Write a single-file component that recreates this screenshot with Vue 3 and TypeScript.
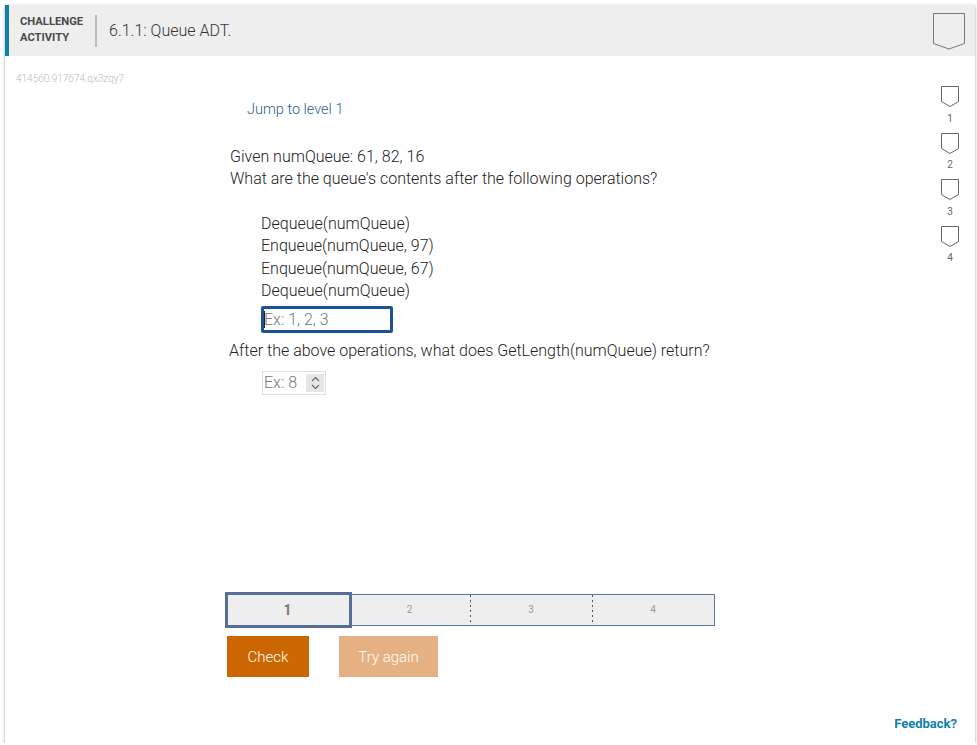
<script setup lang="ts">
const ops: string[] = ['Dequeue(numQueue)', 'Enqueue(numQueue, 97)', 'Enqueue(numQueue, 67)', 'Dequeue(numQueue)']
const levels: number[] = [1, 2, 3, 4]
</script>

<template>
  <div class="card">
    <header class="head">
      <div class="label"><span>CHALLENGE<br />ACTIVITY</span></div>
      <div class="title">6.1.1: Queue ADT.</div>
      <svg class="big-shield" width="34" height="38" viewBox="0 0 34 38">
        <path d="M1.5 1.5H32.5V31.5L17 37L1.5 31.5Z" />
      </svg>
    </header>
    <div class="body">
      <div class="code">414560.917674.qx3zqy7</div>
      <main class="main">
        <a class="jump">Jump to level 1</a>
        <p class="line first">Given numQueue: 61, 82, 16</p>
        <p class="line">What are the queue's contents after the following operations?</p>
        <div class="ops">
          <p v-for="(op, i) in ops" :key="i" class="line">{{ op }}</p>
        </div>
        <div class="answer"><span class="caret"></span><span class="ph">Ex: 1, 2, 3</span></div>
        <p class="line second">After the above operations, what does GetLength(numQueue) return?</p>
        <div class="number">
          <span class="ph">Ex: 8</span>
          <span class="spin">
            <svg width="9" height="14" viewBox="0 0 9 14">
              <path d="M1 5L4.5 1.5L8 5M1 9L4.5 12.5L8 9" />
            </svg>
          </span>
        </div>
        <div class="levels">
          <div class="lv active">1</div>
          <div class="lv w2">2</div>
          <div class="lv w3">3</div>
          <div class="lv w4">4</div>
        </div>
        <div class="actions">
          <button class="btn check">Check</button>
          <button class="btn again">Try again</button>
        </div>
      </main>
      <aside class="side">
        <div v-for="n in levels" :key="n" class="mini">
          <svg width="18" height="21" viewBox="0 0 18 21">
            <path d="M.5 .5H17.5V15.5L9 20.5L.5 15.5Z" />
          </svg>
          <span>{{ n }}</span>
        </div>
      </aside>
      <a class="feedback">Feedback?</a>
    </div>
  </div>
</template>

<style>
html, body { margin: 0; background: #fff; }
</style>

<style scoped>
.card {
  box-sizing: border-box;
  width: 970px;
  height: 738px;
  margin: 5px 0 0 5px;
  background: #fff;
  box-shadow: 0 1px 3px rgba(0, 0, 0, 0.35);
  font-family: Roboto, "Liberation Sans", sans-serif;
  color: #333;
  display: flex;
  flex-direction: column;
}
.head {
  height: 51px;
  flex: none;
  box-sizing: border-box;
  background: #eee;
  border-left: 4px solid #0e80ae;
  display: flex;
  align-items: center;
  padding-right: 9px;
}
.label {
  flex: none;
  width: 75px;
  margin-left: 11px;
  height: 32px;
  font-size: 11.2px;
  font-weight: 700;
  line-height: 16px;
  color: #4a4a4a;
  border-right: 2px solid #bbb;
  margin-right: 12px;
}
.label span { display: block; margin-top: -1px; }
.title {
  flex: 1;
  font-size: 16px;
  font-weight: 300;
  color: #333;
}
.big-shield path { fill: none; stroke: #777; stroke-width: 1; }
.body {
  flex: 1;
  position: relative;
  display: flex;
}
.code {
  position: absolute;
  left: 11px;
  top: 17px;
  font-size: 10px;
  font-weight: 300;
  color: #bbb;
}
.main {
  margin-left: 221px;
  width: 490px;
  display: flex;
  flex-direction: column;
  align-items: flex-start;
  padding-top: 45px;
}
.jump {
  margin-left: 21px;
  font-size: 14.5px;
  line-height: 18px;
  font-weight: 300;
  color: #2a5f8f;
  margin-bottom: 27px;
}
.line {
  margin: 0;
  font-size: 16px;
  font-weight: 300;
  line-height: 22.4px;
  color: #222;
  white-space: nowrap;
}
.first, .main > .line { margin-left: 4px; }
.ops { margin: 22px 0 0 35px; }
.answer {
  box-sizing: border-box;
  width: 132px;
  height: 27px;
  margin: 4px 0 0 35px;
  border: 3px solid #1c5394;
  border-radius: 2px;
  display: flex;
  align-items: center;
}
.caret { width: 1px; height: 17px; background: #222; margin-right: -1px; }
.ph { font-size: 16px; font-weight: 300; color: #777; }
.main > .second { margin: 7px 0 0 3px; }
.number {
  box-sizing: border-box;
  width: 64px;
  height: 24px;
  margin: 8px 0 0 36px;
  border: 1px solid #ddd;
  display: flex;
  align-items: center;
  justify-content: space-between;
  padding: 0 1px;
}
.spin {
  width: 18px;
  height: 18px;
  background: #e6e6e6;
  display: flex;
  align-items: center;
  justify-content: center;
}
.spin path { fill: none; stroke: #666; stroke-width: 1.2; }
.levels {
  margin-top: 197px;
  width: 490px;
  height: 36px;
  display: flex;
  align-items: center;
}
.lv {
  box-sizing: border-box;
  height: 32px;
  background-color: #eee;
  border-top: 1px solid #5b7a9b;
  border-bottom: 1px solid #5b7a9b;
  display: flex;
  align-items: center;
  justify-content: center;
  font-size: 10px;
  color: #999;
}
.active {
  width: 127px;
  height: 36px;
  margin-left: -1px;
  padding-right: 2px;
  border: 3px solid #566e96;
  font-size: 14px;
  font-weight: 700;
  color: #777;
}
.w2, .w3 {
  background-image: repeating-linear-gradient(#556 0 2px, transparent 2px 5px);
  background-size: 1px 100%;
  background-position: right top;
  background-repeat: no-repeat;
}
.w2 { width: 119px; padding-right: 4px; }
.w3 { width: 122px; padding-right: 2px; }
.w4 { width: 122px; padding-right: 1px; border-right: 1px solid #5b7a9b; }
.actions {
  display: flex;
  gap: 30px;
  margin: 8px 0 0 1px;
}
.btn {
  border: 0;
  height: 41px;
  padding: 1px 0 0;
  font-family: inherit;
  font-size: 15px;
  font-weight: 300;
  color: #fff;
}
.check { width: 82px; background: #cc6600; }
.again { width: 99px; background: #e5b183; }
.side {
  position: absolute;
  right: 16px;
  top: 30px;
  width: 18px;
  display: flex;
  flex-direction: column;
  gap: 10.5px;
}
.mini {
  height: 36px;
  display: flex;
  flex-direction: column;
  align-items: center;
}
.mini svg { display: block; flex: none; }
.mini path { fill: none; stroke: #666; stroke-width: 1; }
.mini span {
  font-size: 10px;
  line-height: 12px;
  margin-top: 5.5px;
  color: #666;
}
.feedback {
  position: absolute;
  right: 18px;
  bottom: 12px;
  font-size: 13px;
  font-weight: 700;
  color: #0e80ae;
}
</style>
